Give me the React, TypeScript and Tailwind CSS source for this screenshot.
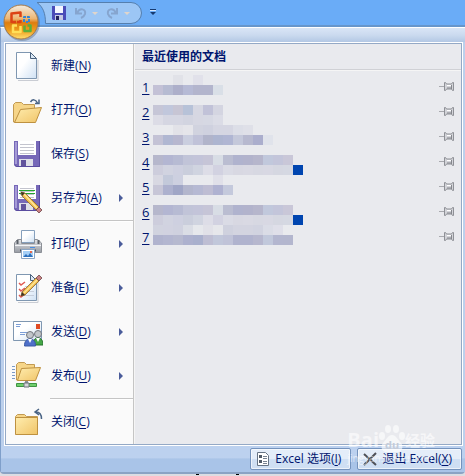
import type { ReactNode } from 'react'

type Item = {
    text: string
    hotkey: string
    icon: ReactNode
    arrow?: boolean
    divider?: boolean
}

const Hotkey = ({ k }: { k: string }) => <span>(<u className="underline-offset-2">{k}</u>)</span>

const Page = () => (
    <>
        <path d="M7 30.500h20V10" fill="none" stroke="#c9ccd3" />
        <path d="M5.500 2.500h14l6 6v20h-20z" fill="url(#paper)" stroke="#7f97b1" />
        <path d="M19.500 2.500v6h6z" fill="#dbe8f4" stroke="#4a617c" />
    </>
)

const Disk = () => (
    <>
        <path d="M3 3h26v26H5l-2-2z" fill="#7668b8" />
        <path d="M4 4h2v22H4z" fill="#a59bd6" />
        <path d="M7 3h18v14H7z" fill="#fff" />
        <path d="M9 6.500h14M9 9.500h14M9 12.500h14M9 15.500h14" stroke="#c3c4ce" />
        <path d="M8 21h14v8H8z" fill="#dedfe8" />
        <path d="M10 22h5v7h-5z" fill="#61539c" />
        <path d="M3.500 27l2 1.500h23V3" fill="none" stroke="#5a4c9f" />
    </>
)

const Pencil = () => (
    <>
        <path d="M10 10l4 1 14 14-3 3L11 14z" fill="#f0bd4d" stroke="#8a6530" strokeWidth="0.800" />
        <path d="M13 12l13 14" stroke="#ffe79a" strokeWidth="1.500" />
        <path d="M10 10l1 4 3-3z" fill="#3d3326" />
        <path d="M25 28l3-3 3 3-3 3z" fill="#c98084" stroke="#6f4747" strokeWidth="0.800" />
    </>
)

const Svg = ({ children }: { children: ReactNode }) => (
    <svg viewBox="0 0 32 32" className="size-8 shrink-0" aria-hidden="true">{children}</svg>
)

const NewIcon = <Svg><Page /></Svg>

const OpenIcon = (
    <Svg>
        <path d="M2.500 28V10.500l2-2h6l2 2h11v5l-3 13z" fill="#f6d588" stroke="#c29a52" />
        <path d="M3.500 28.500l6-13 21-2-6 15z" fill="url(#folder)" stroke="#be9140" />
        <path d="M19.500 8c2-3 5-3 7 1m1.500-3.500v4h-4" fill="none" stroke="#4a6485" strokeWidth="1.500" />
    </Svg>
)

const SaveIcon = <Svg><Disk /></Svg>

const SaveAsIcon = (
    <Svg>
        <Disk />
        <path d="M8 8.500h16M8 11.500h16" stroke="#23a52e" />
        <Pencil />
    </Svg>
)

const PrintIcon = (
    <Svg>
        <path d="M10.500 2.500h13v12h-13z" fill="url(#paper)" stroke="#86a0bd" />
        <path d="M3.500 15l3-3.500h4v4h13v-4h3l4 3.500v9.500h-27z" fill="url(#metal)" stroke="#8b8f96" />
        <path d="M4 17.500h26" stroke="#f3f4f6" />
        <path d="M6.500 12v4M27.500 12v4" stroke="#5b6068" strokeWidth="2" />
        <path d="M9 22.500h16" stroke="#4d535d" strokeWidth="2" />
        <path d="M19 19.500h5" stroke="#4a8de0" />
        <path d="M10.500 21.500h13v9h-13z" fill="#fff" stroke="#8ba5c4" />
        <path d="M12 23h10v6H12z" fill="#a5cff6" />
        <path d="M12 29l3-3 2 2 2-3 3 4z" fill="#2c70bd" />
        <path d="M19 23h2v2h-2z" fill="#e8674b" />
    </Svg>
)

const PrepareIcon = (
    <Svg>
        <Page />
        <path d="M14 14.500h8M14 19.500h9M14 23.500h9" stroke="#c6cedb" />
        <path d="M8 11l2 2 4-3M8 17l2 2 4-3M8 23l2 2 4-3" fill="none" stroke="#df5a52" strokeWidth="1.500" />
        <path d="M10 24l1-4L25 6l3 3-14 14z" fill="#f0bd4d" stroke="#8a6530" strokeWidth="0.800" />
        <path d="M13 21L26 8" stroke="#ffe79a" strokeWidth="1.500" />
        <path d="M10 24l1-4 3 3z" fill="#3d3326" />
        <path d="M25 6l3-3 3 3-3 3z" fill="#c98084" stroke="#6f4747" strokeWidth="0.800" />
    </Svg>
)

const SendIcon = (
    <Svg>
        <path d="M2.500 5.500h28v19h-28z" fill="url(#paper)" stroke="#7f97b1" />
        <path d="M5 8.500h5M5 10.500h4M9 16.500h8M9 18.500h5" stroke="#7c9ed6" />
        <path d="M25 8h4v5h-4z" fill="#e04b23" />
        <circle cx="27" cy="18" r="3.500" fill="#c2c5ca" stroke="#73777e" />
        <path d="M22 29c0-5 2-7 5-7s5 2 5 7z" fill="#45a746" stroke="#24702d" />
        <circle cx="19" cy="19" r="3.500" fill="#c2c5ca" stroke="#73777e" />
        <path d="M13.500 30c0-5 2-7 5.500-7s5.500 2 5.500 7z" fill="#4e70c9" stroke="#3b5aa5" />
        <path d="M17 23l2 4 2-4M25 22l2 4 2-4" fill="#fff" />
    </Svg>
)

const PublishIcon = (
    <Svg>
        <path d="M1 6.500h3M1 9.500h3M1 12.500h3M1 15.500h3M1 18.500h3" stroke="#7c9bc7" />
        <path d="M5.500 20V4.500l2-2h6l2 2h8v5l-4 11z" fill="#f6d588" stroke="#c29a52" />
        <path d="M6.500 20.500l4-12 19-1-5 13z" fill="url(#folder)" stroke="#be9140" />
        <path d="M15.500 21v4" stroke="#8c9199" strokeWidth="3" />
        <path d="M5.500 23.500h8v3h-8zM17.500 23.500h8v3h-8z" fill="#6fcf6c" stroke="#3f9443" />
        <path d="M13 23h5v4h-5z" fill="#d5d7db" stroke="#6d737b" />
    </Svg>
)

const CloseIcon = (
    <Svg>
        <path d="M4.500 28V10.500l2-2h7l2 2h11v18z" fill="#f6d588" stroke="#c29a52" />
        <path d="M4.500 11.500h22v17h-22z" fill="url(#folder)" stroke="#be9140" />
        <path d="M30.500 13c0-5-2-7-5.500-7m3-3l-4 3 4 3" fill="none" stroke="#4a6485" strokeWidth="1.500" />
    </Svg>
)

const items: Item[] = [
    { text: '新建', hotkey: 'N', icon: NewIcon },
    { text: '打开', hotkey: 'O', icon: OpenIcon },
    { text: '保存', hotkey: 'S', icon: SaveIcon },
    { text: '另存为', hotkey: 'A', icon: SaveAsIcon, arrow: true, divider: true },
    { text: '打印', hotkey: 'P', icon: PrintIcon, arrow: true },
    { text: '准备', hotkey: 'E', icon: PrepareIcon, arrow: true },
    { text: '发送', hotkey: 'D', icon: SendIcon, arrow: true },
    { text: '发布', hotkey: 'U', icon: PublishIcon, arrow: true, divider: true },
    { text: '关闭', hotkey: 'C', icon: CloseIcon },
]

// two lines of hidden file name per document, one colour per 10px block, '-' is empty
const longTop = 'b6b7cc b3b6d2 b7bbd3 c1c4d8 c3c4d9 c6c5d7 d8dde5 babdd1 b0b3ce b2b3cc b6b6cc c1c8dc c3c5da c9c7d8'
const longBottom = 'cdcddc d1d3e0 ced0e0 cacedc d0d4e0 dddde7 d2d2e1 dadbe5 d8d8e2 d9d9e3 d7d8e2 d8d8e3 d5d7e1 d5d8e2 0045b0'
const docs = [
    ['- - e1e2e8 - e1e1ea', 'c3c1d6 b6bbd2 adafca b6bad5 b3b5cd b3b5cd d9dfe7'],
    ['c6c6d7 c1c7dc c7c5d4 b7c2d8 d6d7e2 c1c2d8 d4d5e1', 'dcdce6 d5d6e2 d5d6e2 d2d4e0 d6d7e2 d6d8e3 dbdce6'],
    ['- - e2e2e8 e5e5ea d1d3df cfd1df d5d6e2 d5d6e2 dcdee7 dfe0e8', 'c3c2d5 b0b7d2 b7b7cf cacedf c0c2d8 b1b4ca adb5d0 b0b6d3 c4c8da b7b9cf abaecd e0e3eb'],
    [longTop, longBottom],
    ['d8d8e2 c3c9da cdd0e0 - - - e0e0e9', 'c7c6d7 adb1ce a0a6c6 b3b6cd b6b9d3 bebdd3 afb2d1 c4c9dc'],
    [longTop, longBottom],
    ['d1d3df d1d2e0 cfd1df dadde5 e6e8ec e1e1e8 e6e7eb cfd1de d3d4e0 d3d4e0 d1d3e0 dadce6 dfdfe9', 'b0b3ce b3b6d0 b6b9cf adb1ce a9b0cd bebed3 c1c7da c0c3d8 b0b3ce b0b3ce b6b7ce c1c8db b3b6cf b3b6ce'],
]

const Blocks = ({ colors }: { colors: string }) => (
    <span className="flex h-[10px]">
        {colors.split(' ').map((c, i) => (
            <span key={i} className="w-[10px]" style={{ backgroundColor: c === '-' ? 'transparent' : '#' + c }} />
        ))}
    </span>
)

const Pin = () => (
    <svg viewBox="0 0 15 10" className="h-[10px] w-[15px]" aria-hidden="true">
        <path d="M0 4.500h5" stroke="#a8a9ae" />
        <path d="M5.500.5h1l1 1.500h5l1-1.500h1v8h-1l-1-1.500h-5l-1 1.500h-1z" fill="#d3d4d9" stroke="#8e9096" />
        <path d="M8 6h5M12.500 3v4" stroke="#85878d" />
        <path d="M8 3.500h4" stroke="#fff" />
    </svg>
)

const Defs = () => (
    <svg width="0" height="0" className="absolute" aria-hidden="true">
        <defs>
            <linearGradient id="paper" x1="0" y1="0" x2="1" y2="1">
                <stop offset="0.4" stopColor="#fff" />
                <stop offset="1" stopColor="#cfe1f4" />
            </linearGradient>
            <linearGradient id="folder" x1="0" y1="0" x2="1" y2="1">
                <stop offset="0" stopColor="#ffedaf" />
                <stop offset="1" stopColor="#f0c468" />
            </linearGradient>
            <linearGradient id="metal" x1="0" y1="0" x2="0" y2="1">
                <stop offset="0" stopColor="#e2e4e7" />
                <stop offset="1" stopColor="#979ba3" />
            </linearGradient>
            <linearGradient id="orb" x1="0" y1="0" x2="0" y2="1">
                <stop offset="0" stopColor="#f3ece2" />
                <stop offset="0.4" stopColor="#eeb672" />
                <stop offset="0.52" stopColor="#dd7d10" />
                <stop offset="0.75" stopColor="#ee9d1c" />
                <stop offset="1" stopColor="#ffe272" />
            </linearGradient>
        </defs>
    </svg>
)

const OfficeButton = () => (
    <button type="button" aria-label="Office" className="absolute top-0.5 left-0.5 z-10 size-10">
        <svg viewBox="0 0 40 40" className="size-10">
            <circle cx="20" cy="21" r="18" fill="#465d7b" opacity="0.4" />
            <circle cx="19" cy="20" r="17" fill="url(#orb)" stroke="#a87a48" />
            <g fill="none" strokeWidth="2.500" strokeLinejoin="round">
                <path d="M14 20H9.500v-8.500l9-1V15M15 20h3.500v-2" stroke="#dc4315" />
                <path d="M22 20v-5h5v5h-3" stroke="#3384d5" strokeWidth="2" strokeDasharray="3 1" />
                <path d="M15 23.500h-4V30h7.500v-6" stroke="#ffdf58" />
                <path d="M22.500 23.500V29h6v-5.500h-3" stroke="#5bae3c" />
            </g>
        </svg>
    </button>
)

const TitleBar = () => (
    <header className="relative flex h-[27px] items-start border-b-2 border-[#6796cb] bg-[#6aacf7]">
        <OfficeButton />
        <div className="relative ml-9 flex h-[25px] w-[107px] items-center pl-4">
            <svg viewBox="0 0 107 25" className="absolute inset-0 h-full w-full" aria-hidden="true">
                <path d="M1 2.500h94a10.500 10.500 0 0 1 0 21H9.500C9.500 13 7 7 1 2.500z" fill="#9cc6f5" stroke="#557fae" />
            </svg>
            <button type="button" aria-label="保存" className="relative">
                <svg viewBox="0 0 14 14" className="size-[14px]">
                    <path d="M0 0h14v14H1l-1-1z" fill="#4a4cb8" />
                    <path d="M3 0h8v7H3z" fill="#f4f6ff" />
                    <path d="M3 9h8v5H3z" fill="#c6c9e2" />
                    <path d="M4 10h3v4H4z" fill="#22225f" />
                </svg>
            </button>
            <button type="button" aria-label="撤消" className="relative ml-2">
                <svg viewBox="0 0 24 14" className="h-[14px] w-6" fill="none">
                    <path d="M2 2v5.500h6M3 7c3-6 9-4 8 1-.500 2-2 3-4 4" stroke="#86a5cf" strokeWidth="2" />
                    <path d="M18 6h6l-3 3z" fill="#e0d5cb" />
                </svg>
            </button>
            <button type="button" aria-label="恢复" className="relative ml-2">
                <svg viewBox="0 0 24 14" className="h-[14px] w-6" fill="none">
                    <path d="M11 2v5.500H5M10 7C7 1 1 3 2 8c.500 2 2 3 4 4" stroke="#86a5cf" strokeWidth="2" />
                    <path d="M18 6h6l-3 3z" fill="#e0d5cb" />
                </svg>
            </button>
        </div>
        <button type="button" aria-label="自定义快速访问工具栏" className="mt-[9px] ml-[7px]">
            <svg viewBox="0 0 6 7" className="h-[7px] w-[6px]">
                <path d="M0 0h6v1H0zM0 3h6L3 6z" fill="#163a70" />
                <path d="M0 1h6v1H0z" fill="#d5e8ff" />
            </svg>
        </button>
    </header>
)

const Watermark = () => (
    <div aria-hidden="true" className="pointer-events-none absolute right-[30px] bottom-2 flex flex-col text-white/60 select-none">
        <div className="flex items-end leading-5">
            <span className="text-xl leading-6 font-bold">Bai</span>
            <svg viewBox="0 0 26 28" className="h-7 w-[26px]" fill="currentColor">
                <ellipse cx="3" cy="12" rx="3" ry="4" />
                <ellipse cx="9" cy="5" rx="3" ry="4" />
                <ellipse cx="17" cy="5" rx="3" ry="4" />
                <ellipse cx="23" cy="12" rx="3" ry="4" />
                <path d="M13 11c4 0 6 5 9 8s1 9-3 9H7c-4 0-6-6-3-9s5-8 9-8z" />
                <text x="6" y="25" fontSize="11" fontWeight="bold" fill="#c3cbd9">du</text>
            </svg>
            <span className="text-[15px] leading-6 font-bold">经验</span>
        </div>
        <span className="text-[10px] leading-3">jingyan.baidu.com</span>
    </div>
)

const footerButton = 'flex h-[22px] items-center rounded-xs border border-[#7593bd] bg-linear-to-b from-[#e4edf9] from-50% to-[#cfdff3] to-50% pr-[9px] pl-[5px] leading-4 whitespace-nowrap inset-ring inset-ring-white/60'

const App = () => {
    return (
        <div className="bg-[#dcdde3] font-['Open_Sans','Noto_Sans_CJK_SC',sans-serif] text-xs text-[#00156e]">
            <Defs />
            <TitleBar />
            <main className="relative rounded-b-sm border-b-2 border-l border-t border-t-white border-b-[#8ba3c4] border-l-[#7f9fca] bg-[#bcd0ec]">
                <div className="h-[14px] bg-linear-to-b from-[#d9e5f6] via-[#cbdaef] to-[#b3c8e4]" />
                <div className="mr-0.5 ml-[3px] border border-white">
                    <div className="flex border border-[#94a9c6]">
                        <nav className="w-32 shrink-0 border-r border-[#c5c5c5] bg-[#fafafa]">
                            {items.map(item => (
                                <div key={item.hotkey}>
                                    <button type="button" className="flex h-11 w-full items-center pl-[5px] text-left">
                                        {item.icon}
                                        <span className="ml-2 grow leading-4">{item.text}<Hotkey k={item.hotkey} /></span>
                                        {item.arrow && (
                                            <svg viewBox="0 0 4 8" className="mr-[10px] h-2 w-1" aria-hidden="true">
                                                <path d="M0 0l4 4-4 4z" fill="#4a5c9a" />
                                            </svg>
                                        )}
                                    </button>
                                    {item.divider && <hr className="ml-11 border-t border-b border-t-[#c5c5c5] border-b-white" />}
                                </div>
                            ))}
                        </nav>
                        <section className="grow border-l border-[#f5f5f5] bg-[#e9eaee]">
                            <h2 className="border-b border-[#d0d1d5] pt-[5px] pb-1 pl-[7px] leading-4 font-bold">最近使用的文档</h2>
                            <ol className="border-t border-[#f5f5f5] pt-1">
                                {docs.map(([top, bottom], i) => (
                                    <li key={i} className="flex h-[25px] px-[7px]">
                                        <a href="#" className="flex grow">
                                            <u className="w-[11px] text-[13px] leading-[25px] underline-offset-2">{i + 1}</u>
                                            <span className={i % 2 ? 'self-end' : 'self-start'}>
                                                <Blocks colors={top} />
                                                <Blocks colors={bottom} />
                                            </span>
                                        </a>
                                        <button type="button" aria-label="固定" className="h-6"><Pin /></button>
                                    </li>
                                ))}
                            </ol>
                        </section>
                    </div>
                </div>
                <footer className="flex justify-end gap-1.5 bg-linear-to-b from-[#bcd1ef] from-45% to-[#a9c4e8] to-50% pt-0.5 pr-[3px] pb-0.5">
                    <button type="button" className={footerButton}>
                        <svg viewBox="0 0 14 14" className="mr-[5px] size-[14px]" aria-hidden="true">
                            <path d="M1.500.5h8l3 3v10h-11z" fill="#fff" stroke="#667485" />
                            <path d="M3 3h3v3H3zM3 8h3v3H3z" fill="#515b68" />
                            <path d="M7 4.500h4M7 6.500h4M7 9.500h4M7 11.500h4" stroke="#778291" />
                        </svg>
                        Excel 选项<Hotkey k="I" />
                    </button>
                    <button type="button" className={footerButton}>
                        <svg viewBox="0 0 14 14" className="mr-[5px] size-[14px]" aria-hidden="true">
                            <path d="M1 2l12 11M13 1L1 13" stroke="#4e5158" strokeWidth="2" />
                        </svg>
                        退出 Excel<Hotkey k="X" />
                    </button>
                </footer>
                <Watermark />
            </main>
            <div className="flex h-1 gap-[37px] border-b border-[#a9aab2] pl-[196px]">
                <span className="h-px w-[3px] bg-black" />
                <span className="h-px w-[3px] bg-black" />
            </div>
        </div>
    )
}

export default App
